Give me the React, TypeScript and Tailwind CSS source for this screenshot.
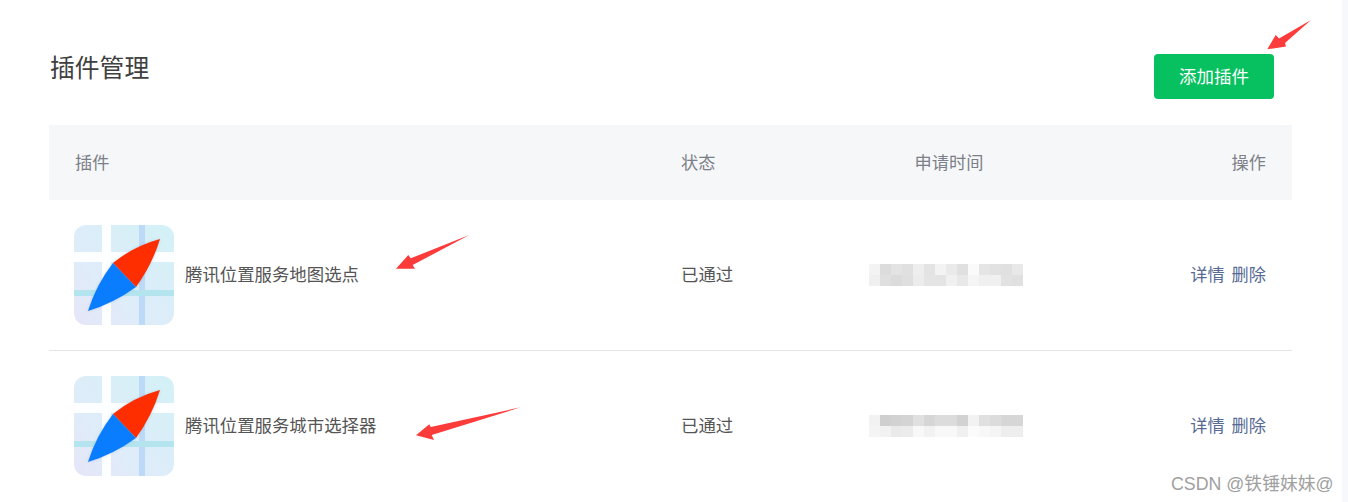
const mosaics = [
  [
    ['#f3f3f3', '#dcdcdc', '#e3e3e3', '#e0e0e0', '#eeeeee', '#e3e3e3', '#f3f3f3', '#eaeaea', '#e0e0e0', '#fafafa', '#e5e5e5', '#e2e2e2', '#e0e0e0', '#e8e8e8'],
    ['#f0f0f0', '#dfdfdf', '#dbdbdb', '#dfdfdf', '#ececec', '#e4e4e4', '#e4e4e4', '#f0f0f0', '#e8e8e8', '#f5f5f5', '#f0f0f0', '#f0f0f0', '#e2e2e2', '#e0e0e0'],
  ],
  [
    ['#f2f2f2', '#cfcfcf', '#d2d2d2', '#d4d4d4', '#e0e0e0', '#d6d6d6', '#dcdcdc', '#dcdcdc', '#d2d2d2', '#f2f2f2', '#e0e0e0', '#dcdcdc', '#d6d6d6', '#d6d6d6'],
    ['#f4f4f4', '#f2f2f2', '#eaeaea', '#ececec', '#f8f8f8', '#f2f2f2', '#f8f8f8', '#f8f8f8', '#f0f0f0', '#fbfbfb', '#f8f8f8', '#f5f5f5', '#eeeeee', '#eeeeee'],
  ],
];

const plugins = [
  { name: '腾讯位置服务地图选点', status: '已通过' },
  { name: '腾讯位置服务城市选择器', status: '已通过' },
];

function PluginIcon({ id }: { id: string }) {
  return (
    <svg width="100" height="100" viewBox="0 0 100 100" className="shrink-0">
      <defs>
        <linearGradient id={id} x1="0" y1="1" x2="1" y2="0">
          <stop offset="0" stopColor="#e6e6f9" />
          <stop offset="0.35" stopColor="#dfecf9" />
          <stop offset="1" stopColor="#d3f1f7" />
        </linearGradient>
        <filter id={id + 's'} x="-20%" y="-20%" width="140%" height="140%">
          <feGaussianBlur stdDeviation="1.5" />
        </filter>
      </defs>
      <rect width="100" height="100" rx="12" fill={`url(#${id})`} />
      <rect x="28" y="0" width="9" height="100" fill="#fdfeff" />
      <rect x="0" y="27" width="100" height="10" fill="#fdfeff" />
      <rect x="65" y="0" width="6" height="100" fill="#bcd9f8" />
      <rect x="0" y="65" width="100" height="6" fill="#b4e4ee" />
      <path d="M86 14 Q60 21 39 38 Q22 60 14 86 Q40 78 62 62 Q78 40 86 14Z" fill="#6a8fc0" opacity="0.35" filter={`url(#${id}s)`} />
      <path d="M86 14 Q60 21 39 38 L62 62 Q78 40 86 14Z" fill="#ff2e00" />
      <path d="M14 86 Q40 78 62 62 L39 38 Q22 60 14 86Z" fill="#0a7dff" />
    </svg>
  );
}

function Mosaic({ rows }: { rows: string[][] }) {
  return (
    <div className="mr-[6px] flex flex-col">
      {rows.map((row, i) => (
        <div key={i} className="flex">
          {row.map((c, j) => (
            <div key={j} className="h-[11px] w-[11px]" style={{ backgroundColor: c }} />
          ))}
        </div>
      ))}
    </div>
  );
}

export default function App() {
  return (
    <div className="relative flex h-[502px] w-[1348px] overflow-hidden bg-white font-['Liberation_Sans','Noto_Sans_CJK_SC',sans-serif] text-[17.4px] text-[#555555]">
      <div className="flex-1 pl-[49px] pr-[50px]">
        {/* Titulo */}
        <div className="flex h-[125px] items-start justify-between">
          <h1 className="ml-px mt-[51px] text-[24.8px] leading-[36px] text-[#404040]">插件管理</h1>
          <button className="mr-[18px] mt-[54px] h-[45px] w-[120px] rounded-[4px] bg-[#07c160] pt-px text-[17.5px] text-white">
            添加插件
          </button>
        </div>

        {/* Cabecera */}
        <div className="grid h-[75px] grid-cols-[606px_151px_234px_200px] items-center bg-[#f6f7f9] px-[26px] pt-[2px] text-[17.2px] text-[#7b8088]">
          <div>插件</div>
          <div>状态</div>
          <div className="text-center">申请时间</div>
          <div className="text-right">操作</div>
        </div>

        {/* Filas */}
        {plugins.map((p, i) => (
          <div
            key={p.name}
            className="grid h-[151px] grid-cols-[606px_151px_234px_200px] items-center border-b border-[#e5e5e5] px-[26px] last:border-transparent"
          >
            <div className="-ml-px flex items-center gap-[11px]">
              <PluginIcon id={'icon' + i} />
              <span>{p.name}</span>
            </div>
            <div>{p.status}</div>
            <div className="flex justify-center">
              <Mosaic rows={mosaics[i]} />
            </div>
            <div className="flex justify-end gap-[7px] pt-[2px] text-[17.2px] text-[#576b95]">
              <a>详情</a>
              <a>删除</a>
            </div>
          </div>
        ))}
      </div>

      {/* Barra de scroll */}
      <div className="w-[6px] bg-[#f7f8fb]" />

      {/* Flechas */}
      <svg className="pointer-events-none absolute left-0 top-0" width="1348" height="502" viewBox="0 0 1348 502">
        <path d="M1267.3 49.3 L1275.7 35 L1279 38.5 L1311 20 L1285 43 L1286 46.5Z" fill="#fc3b3b" />
        <path d="M396 268.7 L408.3 255 L410.7 258.3 L469.3 235 L412.7 265 L415 268.7Z" fill="#fc3b3b" />
        <path d="M416 435.3 L429.3 424.3 L430.7 427 L520.7 407.3 L431.7 435 L434 440Z" fill="#fc3b3b" />
      </svg>

      {/* Marca de agua */}
      <div className="absolute left-[1171px] top-[472px] whitespace-nowrap text-[17.8px] leading-[24px] text-[#a0a0a0]">
        CSDN @铁锤妹妹@
      </div>
    </div>
  );
}
